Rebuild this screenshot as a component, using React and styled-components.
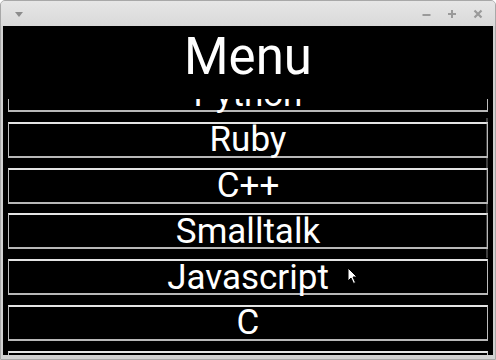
import React from "react";
import styled, { createGlobalStyle } from "styled-components";

const Global = createGlobalStyle`
  html, body { margin: 0; padding: 0; background: #ffffff; }
  body { font-family: Roboto, "Liberation Sans", sans-serif; }
`;

const Window = styled.div`
  width: 496px;
  height: 360px;
  box-sizing: border-box;
  display: flex;
  flex-direction: column;
  background: #d2d2d2;
  border: 1px solid #a8a8a8;
  border-radius: 5px 5px 0 0;
  overflow: hidden;
`;

const TitleBar = styled.div`
  height: 25px;
  flex: none;
  display: flex;
  align-items: center;
  padding: 0 12px 0 13px;
  background: linear-gradient(#e6e6e6, #d9d9d9);
`;

const Spacer = styled.div`
  flex: 1;
`;

const TitleButton = styled.div`
  width: ${(p) => p.$w || 10}px;
  height: 10px;
  display: flex;
  align-items: center;
  justify-content: center;
  margin-left: ${(p) => p.$gap || 0}px;
`;

const Content = styled.div`
  flex: 1;
  margin: 0 2px 4px 2px;
  background: #000;
  display: flex;
  flex-direction: column;
  min-height: 0;
  position: relative;
`;

const Header = styled.div`
  height: 73px;
  box-sizing: border-box;
  padding-bottom: 12px;
  flex: none;
  display: flex;
  align-items: center;
  justify-content: center;
  color: #fff;
  font-size: 51px;
  line-height: 1;
  background: #000;
  position: relative;
  z-index: 1;
`;

const ScrollView = styled.div`
  flex: 1;
  overflow: hidden;
  position: relative;
  min-height: 0;
`;

const List = styled.div`
  display: flex;
  flex-direction: column;
  gap: 9.8px;
  padding: 0 5px 0 5px;
  margin-top: ${(p) => p.$offset}px;
`;

const ItemButton = styled.div`
  height: 36px;
  flex: none;
  box-sizing: border-box;
  display: flex;
  align-items: center;
  justify-content: center;
  color: #fff;
  font-size: 35px;
  border: 1px solid #bdbdbd;
  border-top: 2px solid #e4e4e4;
  border-bottom: 2px solid #b8b8b8;
  background: #000;
  line-height: 1;
`;

const ScrollBar = styled.div`
  position: absolute;
  right: 5px;
  top: 19px;
  width: 2px;
  height: 140px;
  background: rgba(180, 180, 180, 0.35);
`;

const Cursor = styled.svg`
  position: absolute;
  left: 344px;
  top: 241px;
`;

const items = ["Python", "Ruby", "C++", "Smalltalk", "Javascript", "C", "Java"];

export default function App() {
  return (
    <>
      <Global />
      <Window>
        <TitleBar>
          <TitleButton $w={10}>
            <svg width="10" height="8" viewBox="0 0 10 8">
              <path d="M1 2 L9 2 L5 7 Z" fill="#8c8c8c" />
            </svg>
          </TitleButton>
          <Spacer />
          <TitleButton $w={9}>
            <svg width="9" height="10" viewBox="0 0 9 10">
              <rect x="0.5" y="5" width="8" height="2" fill="#9a9a9a" />
            </svg>
          </TitleButton>
          <TitleButton $w={10} $gap={16}>
            <svg width="10" height="10" viewBox="0 0 10 10">
              <rect x="1" y="4" width="8" height="2" fill="#9a9a9a" />
              <rect x="4" y="1" width="2" height="8" fill="#9a9a9a" />
            </svg>
          </TitleButton>
          <TitleButton $w={10} $gap={16}>
            <svg width="10" height="10" viewBox="0 0 10 10">
              <path d="M1.5 1.5 L8.5 8.5 M8.5 1.5 L1.5 8.5" stroke="#9a9a9a" strokeWidth="2.2" />
            </svg>
          </TitleButton>
        </TitleBar>
        <Content>
          <Header>Menu</Header>
          <ScrollView>
            <List $offset={-23}>
              {items.map((it) => (
                <ItemButton key={it}>{it}</ItemButton>
              ))}
            </List>
            <ScrollBar />
          </ScrollView>
          <Cursor width="12" height="18" viewBox="0 0 12 18">
            <path d="M1 1 L1 14 L4 11 L6.5 16.5 L8.5 15.5 L6 10 L10 10 Z" fill="#fff" stroke="#000" strokeWidth="1" />
          </Cursor>
        </Content>
      </Window>
    </>
  );
}
